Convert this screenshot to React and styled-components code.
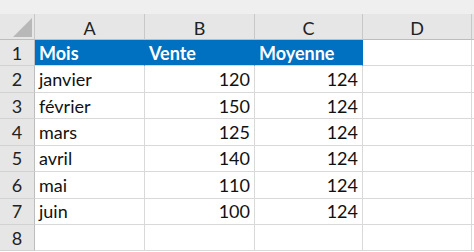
import React from 'react';
import styled, { createGlobalStyle } from 'styled-components';

const GlobalStyle = createGlobalStyle`
  html, body {
    margin: 0;
    padding: 0;
    background: #ffffff;
    overflow: hidden;
  }
`;

const Sheet = styled.div`
  width: 474px;
  height: 252px;
  overflow: hidden;
  font-family: Lato, "Open Sans", "Liberation Sans", sans-serif;
  background: #ffffff;
`;

const TopStrip = styled.div`
  height: 14px;
  background: #efefef;
`;

const Grid = styled.div`
  display: grid;
  grid-template-columns: 35px 110px 110px 108px 109px 10px;
  grid-template-rows: 26px repeat(8, 26.43px);
`;

const Corner = styled.div`
  position: relative;
  background: #e6e6e6;
  border-right: 1px solid #c8c8c8;
  border-bottom: 1px solid #bdbdbd;
  box-sizing: border-box;
`;

const CornerMark = styled.svg`
  position: absolute;
  left: 13px;
  top: 4px;
`;

const ColHead = styled.div`
  display: flex;
  align-items: center;
  justify-content: center;
  background: #e6e6e6;
  border-right: 1px solid #c8c8c8;
  border-bottom: 1px solid #bdbdbd;
  box-sizing: border-box;
  color: #222;
  font-size: 18px;
  padding-top: 2px;
`;

const RowHead = styled.div`
  display: flex;
  align-items: center;
  justify-content: center;
  background: #e6e6e6;
  border-right: 1px solid #bdbdbd;
  border-bottom: 1px solid #d2d2d2;
  box-sizing: border-box;
  color: #222;
  font-size: 18px;
`;

const Cell = styled.div`
  display: flex;
  align-items: center;
  justify-content: ${(p) => (p.$num ? 'flex-end' : 'flex-start')};
  padding: 0 4px;
  background: ${(p) => (p.$head ? '#0070c0' : '#ffffff')};
  color: ${(p) => (p.$head ? '#ffffff' : '#111')};
  font-weight: ${(p) => (p.$head ? 700 : 400)};
  border-right: 1px solid ${(p) => (p.$head ? '#0070c0' : '#d9d9d9')};
  border-bottom: 1px solid #d9d9d9;
  box-sizing: border-box;
  font-size: 18px;
  white-space: nowrap;
`;

const columns = ['A', 'B', 'C', 'D', ''];

const data = [
  ['janvier', 120, 124],
  ['février', 150, 124],
  ['mars', 125, 124],
  ['avril', 140, 124],
  ['mai', 110, 124],
  ['juin', 100, 124],
];

const App = () => {
  return (
    <Sheet>
      <GlobalStyle />
      <TopStrip />
      <Grid>
        <Corner>
          <CornerMark width="20" height="20" viewBox="0 0 20 20">
            <polygon points="19,0 19,19 0,19" fill="#b8b8b8" />
          </CornerMark>
        </Corner>
        {columns.map((c, i) => (
          <ColHead key={i}>{c}</ColHead>
        ))}

        <RowHead>1</RowHead>
        <Cell $head>Mois</Cell>
        <Cell $head>Vente</Cell>
        <Cell $head>Moyenne</Cell>
        <Cell />
        <Cell />

        {data.map((row, i) => (
          <React.Fragment key={i}>
            <RowHead>{i + 2}</RowHead>
            <Cell>{row[0]}</Cell>
            <Cell $num>{row[1]}</Cell>
            <Cell $num>{row[2]}</Cell>
            <Cell />
            <Cell />
          </React.Fragment>
        ))}

        <RowHead>8</RowHead>
        <Cell />
        <Cell />
        <Cell />
        <Cell />
        <Cell />
      </Grid>
    </Sheet>
  );
};

export default App;
